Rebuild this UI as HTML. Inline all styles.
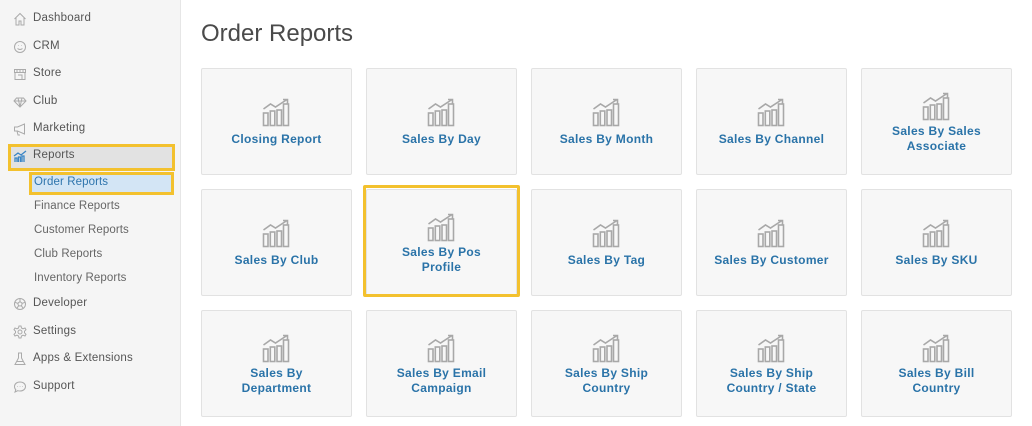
<!DOCTYPE html>
<html><head><meta charset="utf-8"><style>
*{margin:0;padding:0;box-sizing:border-box}
body{width:1032px;height:426px;overflow:hidden;background:#fff;font-family:"Liberation Sans",sans-serif;position:relative}
.side{position:absolute;left:0;top:0;width:181px;height:426px;background:#f5f5f5;border-right:1px solid #e6e6e6}
.it{position:absolute;left:33px;font-size:11.5px;color:#555;letter-spacing:.2px}
.ic{position:absolute;left:13px;width:14px;height:14px}
.sub{position:absolute;left:34px;font-size:11.5px;color:#666;letter-spacing:.1px}
.card{position:absolute;width:151px;height:107px;background:#f7f7f7;border:1px solid #e2e2e2;border-radius:2px;text-align:center}
.card svg{position:absolute;left:60px;width:29px;height:29px}
.card span{position:absolute;left:0;right:0;color:#2a73a8;font-size:12px;line-height:15px;font-weight:bold;letter-spacing:.3px}
h1{position:absolute;left:201px;top:20px;font-size:24px;font-weight:normal;color:#4a4a4a}
</style></head><body>
<div class="side">
<div style="position:absolute;left:8px;top:144px;width:167px;height:27px;background:#e2e2e2;border:3px solid #f3c12e"></div>
<div style="position:absolute;left:29px;top:172px;width:145px;height:23px;background:#d3e5f5;border:3px solid #f3c12e"></div>
<svg class="ic" style="top:12px" viewBox="0 0 14 14" fill="none" stroke="#aaa"><path d="M1.5 7L7 1.5 12.5 7M3 6v7h3V9h2v4h3V6"/></svg>
<div class="it" style="top:12px">Dashboard</div>
<svg class="ic" style="top:40px" viewBox="0 0 14 14" fill="none" stroke="#aaa"><circle cx="7" cy="7" r="5.5"/><path d="M4.5 8.5q2.5 2 5 0M5 5.5h.5M8.5 5.5h.5"/></svg>
<div class="it" style="top:40px">CRM</div>
<svg class="ic" style="top:67px" viewBox="0 0 14 14" fill="none" stroke="#aaa"><path d="M1.5 2.5h11v3h-11zM2 5.5v7h10v-7M4 2.5v3M7 2.5v3M10 2.5v3M5 8h4v4"/></svg>
<div class="it" style="top:67px">Store</div>
<svg class="ic" style="top:95px" viewBox="0 0 14 14" fill="none" stroke="#aaa"><path d="M3.5 3h7l2.5 3-6 6-6-6zM1 6h12M5 3l2 9 2-9"/></svg>
<div class="it" style="top:95px">Club</div>
<svg class="ic" style="top:122px" viewBox="0 0 14 14" fill="none" stroke="#aaa"><path d="M1.5 5h3l7-3v10l-7-3h-3zM4 9l1 4h2"/></svg>
<div class="it" style="top:122px">Marketing</div>
<svg class="ic" style="top:149px" viewBox="0 0 14 14" fill="none" stroke="#3a85c5" stroke-width="1.3"><path d="M2 13V9h2v4M5.5 13V8h2v5M9 13V7h2v6M1 7l4-3 3 2 5-4"/></svg>
<div class="it" style="top:149px">Reports</div>
<div class="sub" style="top:176px;color:#2f75ad">Order Reports</div>
<div class="sub" style="top:200px">Finance Reports</div>
<div class="sub" style="top:224px">Customer Reports</div>
<div class="sub" style="top:248px">Club Reports</div>
<div class="sub" style="top:272px">Inventory Reports</div>
<svg class="ic" style="top:297px" viewBox="0 0 14 14" fill="none" stroke="#aaa"><circle cx="7" cy="7" r="5.5"/><circle cx="7" cy="7" r="2"/><path d="M7 1.5v3.5M12.2 5.3L9 6.4M10.3 11.4L8.2 8.6M3.7 11.4L5.8 8.6M1.8 5.3L5 6.4"/></svg>
<div class="it" style="top:297px">Developer</div>
<svg class="ic" style="top:325px" viewBox="0 0 14 14" fill="none" stroke="#aaa"><circle cx="7" cy="7" r="2"/><path d="M6 1h2l.5 2 1.5.8 2-.8 1 1.7-1.5 1.5v1.6l1.5 1.5-1 1.7-2-.8-1.5.8-.5 2H6l-.5-2-1.5-.8-2 .8-1-1.7 1.5-1.5V6.2L1 4.7l1-1.7 2 .8 1.5-.8z"/></svg>
<div class="it" style="top:325px">Settings</div>
<svg class="ic" style="top:352px" viewBox="0 0 14 14" fill="none" stroke="#aaa"><path d="M5 1h4M5.5 1v5L2 12.5h10L8.5 6V1M3.5 9.5h7"/></svg>
<div class="it" style="top:352px">Apps &amp; Extensions</div>
<svg class="ic" style="top:380px" viewBox="0 0 14 14" fill="none" stroke="#aaa"><path d="M7 2c3.3 0 5.5 2 5.5 4.5S10.3 11 7 11c-.8 0-1.5-.1-2.2-.3L2 12l.8-2.3C1.9 8.9 1.5 7.8 1.5 6.5 1.5 4 3.7 2 7 2z"/><path d="M4.5 6.5h.5M6.8 6.5h.5M9 6.5h.5"/></svg>
<div class="it" style="top:380px">Support</div>
</div>
<h1>Order Reports</h1>
<svg width="0" height="0" style="position:absolute"><defs><g id="ch" fill="none" stroke="#a8a8a8" stroke-width="1.6"><rect x="1.5" y="15" width="4.5" height="12.5"/><rect x="8.3" y="13" width="4.5" height="14.5"/><rect x="15" y="12" width="4.5" height="15.5"/><rect x="21.5" y="6" width="5" height="21.5"/><path d="M1.5 11l7-5 5 3 11.5-7.5M21 1.5h4.5V6"/></g></defs></svg>
<div id="g"></div>
<div style="position:absolute;left:363px;top:185px;width:157px;height:112px;border:3px solid #f3c12e;border-radius:2px"></div>
<script>
var L=[["Closing Report"],["Sales By Day"],["Sales By Month"],["Sales By Channel"],["Sales By Sales","Associate"],
["Sales By Club"],["Sales By Pos","Profile"],["Sales By Tag"],["Sales By Customer"],["Sales By SKU"],
["Sales By","Department"],["Sales By Email","Campaign"],["Sales By Ship","Country"],["Sales By Ship","Country / State"],["Sales By Bill","Country"]];
var h="";
L.forEach(function(t,i){var c=i%5,r=Math.floor(i/5);var x=201+c*165,y=68+r*121;
var two=t.length>1;
h+='<div class="card" style="left:'+x+'px;top:'+y+'px"><svg style="top:'+(two?23:29)+'px" viewBox="0 0 29 29"><use href="#ch"/></svg><span style="top:'+(two?55:63)+'px">'+t.join("<br>")+'</span></div>';});
document.getElementById("g").innerHTML=h;
</script>
</body></html>
